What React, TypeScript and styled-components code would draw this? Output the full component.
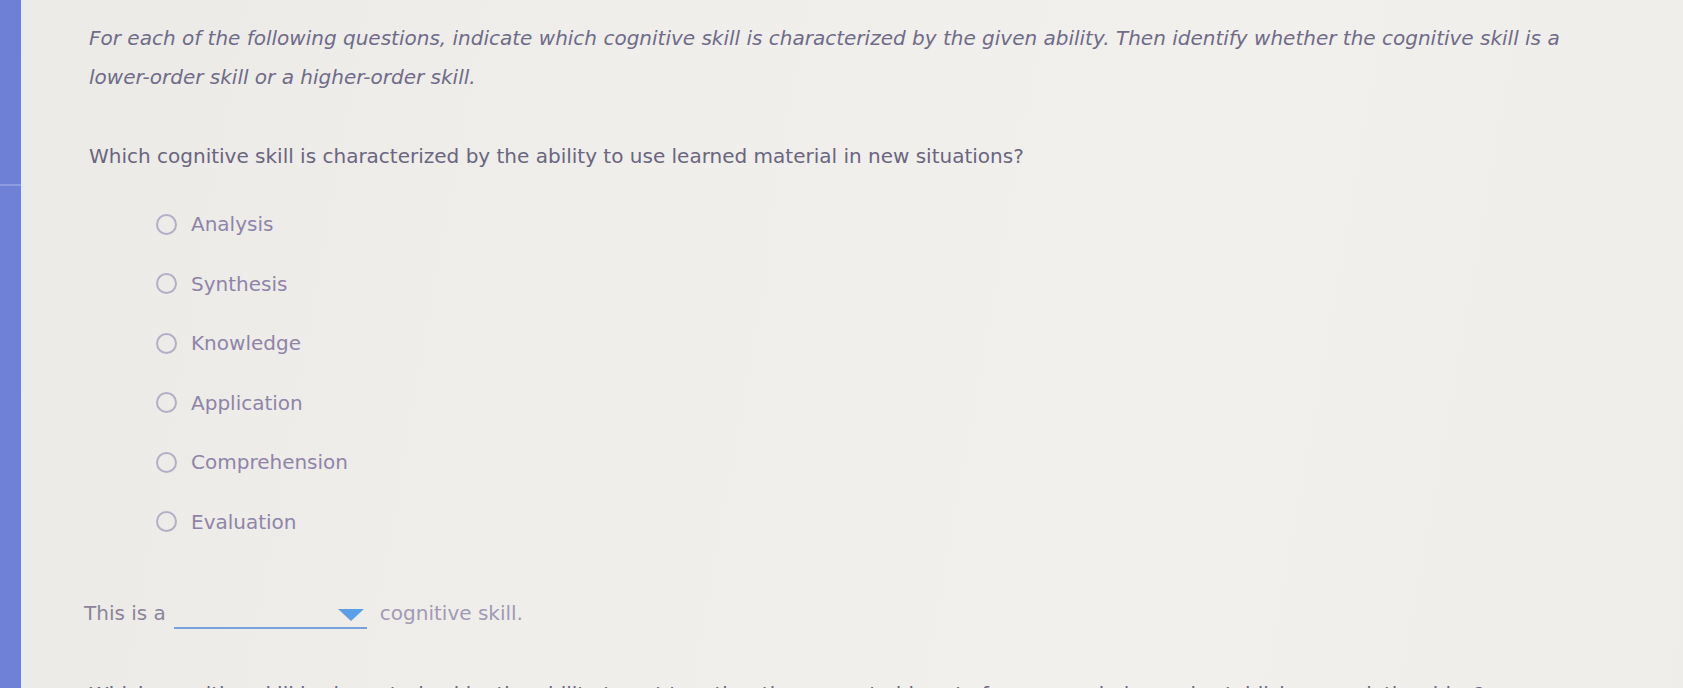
import styled, { createGlobalStyle } from "styled-components";
import { useState } from "react";

const GlobalStyle = createGlobalStyle`
  html, body {
    margin: 0;
    padding: 0;
    height: 688px;
    overflow: hidden;
    background: #eeede9;
  }
  #root {
    height: 100%;
  }
`;

const Page = styled.div`
  display: flex;
  height: 688px;
  font-family: "DejaVu Sans", Verdana, sans-serif;
  font-size: 20px;
  color: #6d6882;
  background: linear-gradient(100deg, #ebeae6 0%, #efeeea 35%, #f1f0ec 70%, #eeede9 100%);
`;

const SideBar = styled.div`
  width: 21px;
  flex-shrink: 0;
  display: flex;
  flex-direction: column;
  background: #6f80d7;
`;

const SideTop = styled.div`
  height: 184px;
  border-bottom: 2px solid #8d9be0;
  background: #6e7fd6;
`;

const Content = styled.div`
  flex: 1;
  padding: 19px 0 0 68px;
`;

const Intro = styled.p`
  margin: 0;
  font-style: italic;
  line-height: 38.5px;
  color: #6f6b89;
  max-width: 1500px;
`;

const Question = styled.p<{ $gap: number }>`
  margin: ${(p) => p.$gap}px 0 0;
  line-height: 38.5px;
  color: #6a6580;
  white-space: nowrap;
`;

const Options = styled.div`
  margin: 19px 0 0 67px;
  display: flex;
  flex-direction: column;
`;

const Option = styled.label`
  display: flex;
  align-items: center;
  gap: 14px;
  height: 59.5px;
  cursor: pointer;
  color: #8f84a8;
`;

const Radio = styled.span<{ $on: boolean }>`
  width: 17px;
  height: 17px;
  border-radius: 50%;
  border: 2px solid #b5aec6;
  display: inline-flex;
  align-items: center;
  justify-content: center;
  &::after {
    content: "";
    width: 9px;
    height: 9px;
    border-radius: 50%;
    background: ${(p) => (p.$on ? "#6f80d7" : "transparent")};
  }
`;

const Answer = styled.div`
  margin: 41.5px 0 0 -5px;
  display: flex;
  align-items: center;
  height: 40px;
  color: #8b849a;
`;

const Select = styled.div`
  width: 193px;
  height: 34px;
  margin: 0 13px 0 8px;
  border-bottom: 2px solid #78a2de;
  position: relative;
  top: -1px;
  display: flex;
  justify-content: flex-end;
  align-items: flex-start;
  box-sizing: border-box;
  cursor: pointer;
`;

const Caret = styled.svg`
  margin: 14px 3px 0 0;
`;

const Tail = styled.span`
  color: #a299b5;
`;

const options = [
  "Analysis",
  "Synthesis",
  "Knowledge",
  "Application",
  "Comprehension",
  "Evaluation",
];

export default function App() {
  const [picked, setPicked] = useState<number | null>(null);

  return (
    <>
      <GlobalStyle />
      <Page>
        <SideBar>
          <SideTop />
        </SideBar>
        <Content>
          <Intro>
            For each of the following questions, indicate which cognitive skill is characterized by the given ability. Then identify whether the cognitive skill is a lower-order skill or a higher-order skill.
          </Intro>
          <Question $gap={41}>
            Which cognitive skill is characterized by the ability to use learned material in new situations?
          </Question>
          <Options>
            {options.map((o, i) => (
              <Option key={o} onClick={() => setPicked(i)}>
                <Radio $on={picked === i} />
                {o}
              </Option>
            ))}
          </Options>
          <Answer>
            This is a
            <Select>
              <Caret width="26" height="12" viewBox="0 0 26 12">
                <path d="M0 0 H26 L13 12 Z" fill="#5c9fe9" />
              </Caret>
            </Select>
            <Tail>cognitive skill.</Tail>
          </Answer>
          <Question $gap={42}>
            Which cognitive skill is characterized by the ability to put together the separate ideas to form new wholes and establish new relationships?
          </Question>
        </Content>
      </Page>
    </>
  );
}
